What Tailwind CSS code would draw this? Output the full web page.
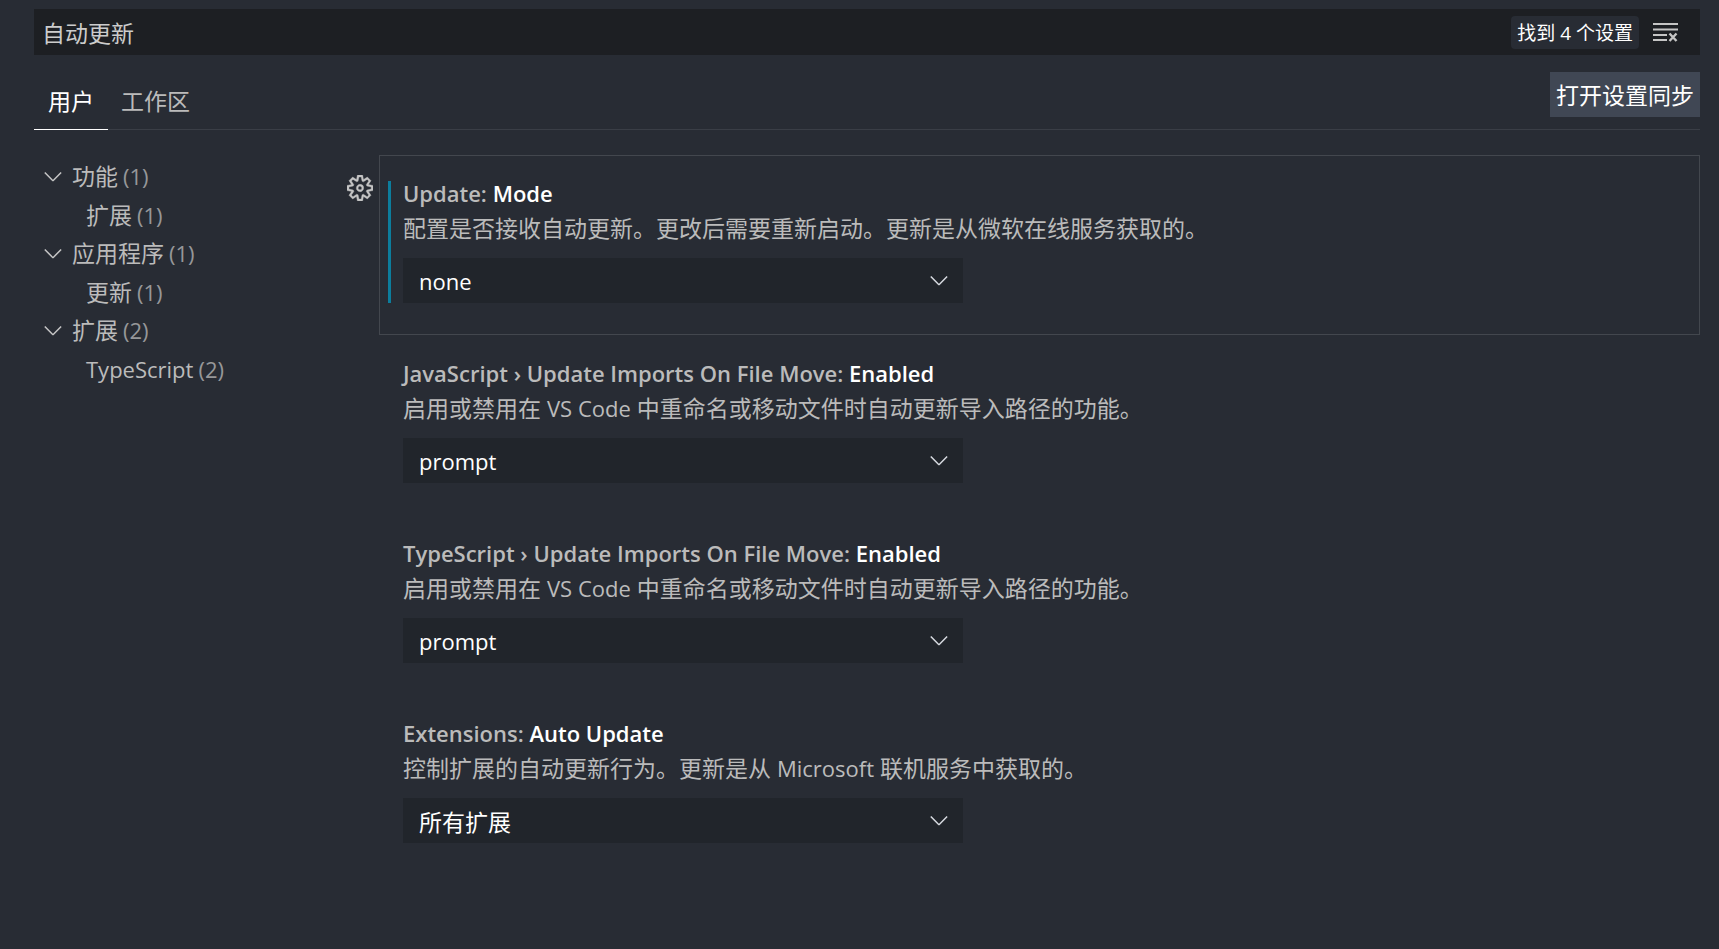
<!DOCTYPE html>
<html lang="zh-CN">
  <head>
    <meta charset="UTF-8" />
    <meta name="viewport" content="width=device-width, initial-scale=1.0" />
    <script src="https://cdn.jsdelivr.net/npm/@tailwindcss/browser@4"></script>
    <title>设置</title>
  </head>
  <body
    class="min-h-screen bg-[#282c34] text-[#bbbbbb] font-['Open_Sans','Noto_Sans_CJK_SC',sans-serif] text-[23px] leading-[36px]"
  >
    <!-- Shared icons -->
    <svg class="hidden">
      <symbol id="chevron" viewBox="0 0 16 16">
        <path
          d="M7.976 10.072l4.357-4.357.62.618L8.284 11h-.618L3 6.333l.619-.618 4.357 4.357z"
        />
      </symbol>
    </svg>

    <header class="pl-[34px] pr-[19px] pt-[9px]">
      <div class="flex items-center h-[46px] bg-[#1d1f23] pl-2 pr-5">
        <input
          type="text"
          aria-label="搜索设置"
          value="自动更新"
          class="flex-1 min-w-0 pt-0.5 bg-transparent outline-none text-[#cccccc]"
        />
        <span
          class="h-[33px] px-[6px] rounded bg-[#282c34] text-white text-[19px] leading-[35px] whitespace-nowrap"
          >找到 4 个设置</span
        >
        <button aria-label="清除搜索结果" class="ml-[13px]">
          <svg class="w-[28px] h-[28px]" viewBox="0 0 28 28" fill="none" stroke="#c5c5c5">
            <path d="M1 6h25M1 11.500h25M1 17h14M1 22h14" stroke-width="2" />
            <path d="M17.500 15.500l7 7.500M24.500 15.500l-7 7.500" stroke-width="2.400" />
          </svg>
        </button>
      </div>

      <div class="flex items-start justify-between pt-[17px] border-b border-[#3a3e46] h-[75px]">
        <nav class="flex self-end -mb-px">
          <a
            href="#"
            class="h-[47px] px-[14px] border-b border-white text-white leading-[36px]"
            >用户</a
          >
          <a href="#" class="h-[47px] px-[13px] leading-[36px]">工作区</a>
        </nav>
        <button class="h-[45px] px-[6px] bg-[#404754] text-white">
          打开设置同步
        </button>
      </div>
    </header>

    <div class="flex pl-[34px] pr-[19px]">
      <aside class="w-[310px] shrink-0 pt-[27px]">
        <ul>
          <li class="flex items-center h-[38px] pl-[5px]">
            <svg class="w-7 h-7 fill-[#c5c5c5] mr-[5px]"><use href="#chevron" /></svg>
            <a href="#">功能</a>
            <span class="ml-[5px] text-[22px] text-[#969799]">(1)</span>
          </li>
          <li class="flex items-center h-[39px] pl-[52px]">
            <a href="#">扩展</a>
            <span class="ml-[5px] text-[22px] text-[#969799]">(1)</span>
          </li>
          <li class="flex items-center h-[38px] pl-[5px]">
            <svg class="w-7 h-7 fill-[#c5c5c5] mr-[5px]"><use href="#chevron" /></svg>
            <a href="#">应用程序</a>
            <span class="ml-[5px] text-[22px] text-[#969799]">(1)</span>
          </li>
          <li class="flex items-center h-[39px] pl-[52px]">
            <a href="#">更新</a>
            <span class="ml-[5px] text-[22px] text-[#969799]">(1)</span>
          </li>
          <li class="flex items-center h-[38px] pl-[5px]">
            <svg class="w-7 h-7 fill-[#c5c5c5] mr-[5px]"><use href="#chevron" /></svg>
            <a href="#">扩展</a>
            <span class="ml-[5px] text-[22px] text-[#969799]">(2)</span>
          </li>
          <li class="flex items-center h-[39px] pl-[52px]">
            <a href="#" class="text-[22px]">TypeScript</a>
            <span class="ml-[5px] text-[22px] text-[#969799]">(2)</span>
          </li>
        </ul>
      </aside>

      <main class="flex-1 min-w-0 pt-[25px]">
        <section class="flex items-start">
          <button aria-label="更多操作" class="ml-[3px] mr-[6px] mt-5 shrink-0">
            <svg class="w-[26px] h-[26px] fill-[#c5c5c5] stroke-[#c5c5c5]" viewBox="0 0 24 24" stroke-width="0.300">
              <path
                fill-rule="evenodd"
                d="M19.85 8.75l4.15.83v4.84l-4.15.83 2.35 3.52-3.43 3.43-3.52-2.35-.83 4.15H9.58l-.83-4.15-3.52 2.35-3.43-3.43 2.35-3.52L0 14.42V9.58l4.15-.83L1.8 5.23 5.23 1.8l3.52 2.35L9.58 0h4.84l.83 4.15 3.52-2.35 3.43 3.43-2.35 3.52zm-1.57 5.07l4-.81v-2l-4-.81-.54-1.3 2.29-3.43-1.43-1.43-3.43 2.29-1.3-.54-.81-4h-2l-.81 4-1.3.54-3.43-2.29-1.43 1.43L6.38 8.9l-.54 1.3-4 .81v2l4 .81.54 1.3-2.29 3.43 1.43 1.43 3.43-2.29 1.3.54.81 4h2l.81-4 1.3-.54 3.43 2.29 1.43-1.43-2.29-3.43.54-1.3zm-8.186-4.672A3.43 3.43 0 0 1 12 8.57 3.44 3.44 0 0 1 15.43 12a3.43 3.43 0 1 1-5.336-2.852zm.956 4.274c.281.188.612.288.95.288A1.7 1.7 0 0 0 13.71 12a1.71 1.71 0 1 0-2.66 1.422z"
              />
            </svg>
          </button>
          <div class="flex-1 min-w-0 h-[180px] border border-[#43474e] pl-2 pt-[25px]">
            <!-- Left bar marks a modified setting -->
            <div class="border-l-3 border-[#0c7d9d] pl-3">
              <label for="update-mode" class="block text-[22px] leading-[24px] font-semibold"
                >Update: <span class="text-white">Mode</span></label
              >
              <p class="mt-[5px]">
                配置是否接收自动更新。更改后需要重新启动。更新是从微软在线服务获取的。
              </p>
              <div class="relative max-w-[560px] mt-3">
                <select
                  id="update-mode"
                  class="block w-full h-[45px] appearance-none bg-[#21252b] pl-4 text-[22px] text-white"
                >
                  <option>none</option>
                </select>
                <svg class="absolute right-[10px] top-2 w-7 h-7 fill-[#d7dae0] pointer-events-none"><use href="#chevron" /></svg>
              </div>
            </div>
          </div>
        </section>

        <section class="h-[180px] ml-[59px] pt-[26px]">
          <label for="js-imports" class="block text-[22px] leading-[24px] font-semibold"
            >JavaScript › Update Imports On File Move:
            <span class="text-white">Enabled</span></label
          >
          <p class="mt-[5px]">
            启用或禁用在 <span class="text-[22px]">VS Code</span> 中重命名或移动文件时自动更新导入路径的功能。
          </p>
          <div class="relative max-w-[560px] mt-3">
            <select
              id="js-imports"
              class="block w-full h-[45px] appearance-none bg-[#21252b] pl-4 text-[22px] text-white"
            >
              <option>prompt</option>
            </select>
            <svg class="absolute right-[10px] top-2 w-7 h-7 fill-[#d7dae0] pointer-events-none"><use href="#chevron" /></svg>
          </div>
        </section>

        <section class="h-[180px] ml-[59px] pt-[26px]">
          <label for="ts-imports" class="block text-[22px] leading-[24px] font-semibold"
            >TypeScript › Update Imports On File Move:
            <span class="text-white">Enabled</span></label
          >
          <p class="mt-[5px]">
            启用或禁用在 <span class="text-[22px]">VS Code</span> 中重命名或移动文件时自动更新导入路径的功能。
          </p>
          <div class="relative max-w-[560px] mt-3">
            <select
              id="ts-imports"
              class="block w-full h-[45px] appearance-none bg-[#21252b] pl-4 text-[22px] text-white"
            >
              <option>prompt</option>
            </select>
            <svg class="absolute right-[10px] top-2 w-7 h-7 fill-[#d7dae0] pointer-events-none"><use href="#chevron" /></svg>
          </div>
        </section>

        <section class="h-[180px] ml-[59px] pt-[26px]">
          <label for="auto-update" class="block text-[22px] leading-[24px] font-semibold"
            >Extensions: <span class="text-white">Auto Update</span></label
          >
          <p class="mt-[5px]">
            控制扩展的自动更新行为。更新是从 <span class="text-[22px]">Microsoft</span> 联机服务中获取的。
          </p>
          <div class="relative max-w-[560px] mt-3">
            <select
              id="auto-update"
              class="block w-full h-[45px] appearance-none bg-[#21252b] pl-4 pt-0.5 text-[23px] text-white"
            >
              <option>所有扩展</option>
            </select>
            <svg class="absolute right-[10px] top-2 w-7 h-7 fill-[#d7dae0] pointer-events-none"><use href="#chevron" /></svg>
          </div>
        </section>
      </main>
    </div>
  </body>
</html>
